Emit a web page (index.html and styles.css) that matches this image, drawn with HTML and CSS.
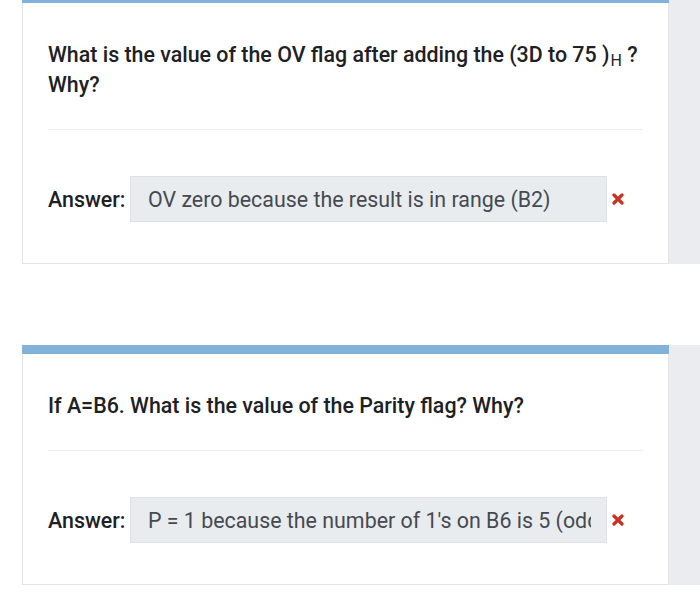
FILE: index.html
```html
<!DOCTYPE html>
<html>
<head>
<meta charset="utf-8">
<link rel="stylesheet" href="styles.css">
</head>
<body>
<div class="page">
  <div class="que">
    <div class="card">
      <div class="bar bar-cut"></div>
      <div class="content">
        <div class="qtext">What is the value of the OV flag after adding the (3D to 75 )<sub>H</sub> ?<br>Why?</div>
        <div class="ablock">
          <span class="label">Answer:</span>
          <span class="answer"><span class="val">OV zero because the result is in range (B2)</span></span>
          <svg class="icon" viewBox="0 0 12 12" width="12" height="12"><path d="M2 2 L10 10 M10 2 L2 10" stroke="#ca3120" stroke-width="3.2" stroke-linecap="round"/></svg>
        </div>
      </div>
    </div>
    <div class="side"></div>
  </div>
  <div class="que">
    <div class="card">
      <div class="bar"></div>
      <div class="content">
        <div class="qtext">If A=B6. What is the value of the Parity flag? Why?</div>
        <div class="ablock">
          <span class="label">Answer:</span>
          <span class="answer"><span class="val">P = 1 because the number of 1's on B6 is 5 (odd)</span></span>
          <svg class="icon" viewBox="0 0 12 12" width="12" height="12"><path d="M2 2 L10 10 M10 2 L2 10" stroke="#ca3120" stroke-width="3.2" stroke-linecap="round"/></svg>
        </div>
      </div>
    </div>
    <div class="side"></div>
  </div>
</div>
</body>
</html>
```
FILE: styles.css
```css
html, body {
  margin: 0;
  padding: 0;
  background: #ffffff;
}
body {
  font-family: Roboto, "Liberation Sans", Arial, sans-serif;
  color: #1d2125;
}
.page {
  display: flex;
  flex-direction: column;
  gap: 81px;
}
.que {
  display: flex;
  align-items: stretch;
}
.card {
  margin-left: 22px;
  width: 647px;
  box-sizing: border-box;
  border: 1px solid #e3e5e8;
  border-top: none;
  background: #fff;
}
.bar {
  height: 9px;
  margin: 0 -1px;
  background: #82b2da;
}
.bar-cut {
  height: 3px;
}
.content {
  padding: 37px 25px 41px 25px;
}
.qtext {
  font-size: 21.4px;
  line-height: 30px;
  font-weight: 500;
  padding-bottom: 29px;
  border-bottom: 1px solid #eceef0;
}
.qtext sub {
  font-size: 16px;
  font-weight: 400;
  vertical-align: -4px;
  line-height: 0;
  margin-left: 1px;
}
.ablock {
  display: flex;
  align-items: center;
  margin-top: 46px;
}
.label {
  width: 82px;
  font-size: 21.4px;
  font-weight: 500;
}
.answer {
  box-sizing: border-box;
  width: 477px;
  height: 46px;
  display: flex;
  align-items: center;
  padding: 0 15px 0 17px;
  background: #e9ecef;
  border: 1px solid #dee2e6;
  font-size: 21.4px;
  color: #464a4f;
}
.val {
  flex: 1;
  min-width: 0;
  white-space: nowrap;
  overflow: hidden;
}
.icon {
  margin-left: 5px;
}
.side {
  flex: 1;
  background: #eaecef;
}
```
